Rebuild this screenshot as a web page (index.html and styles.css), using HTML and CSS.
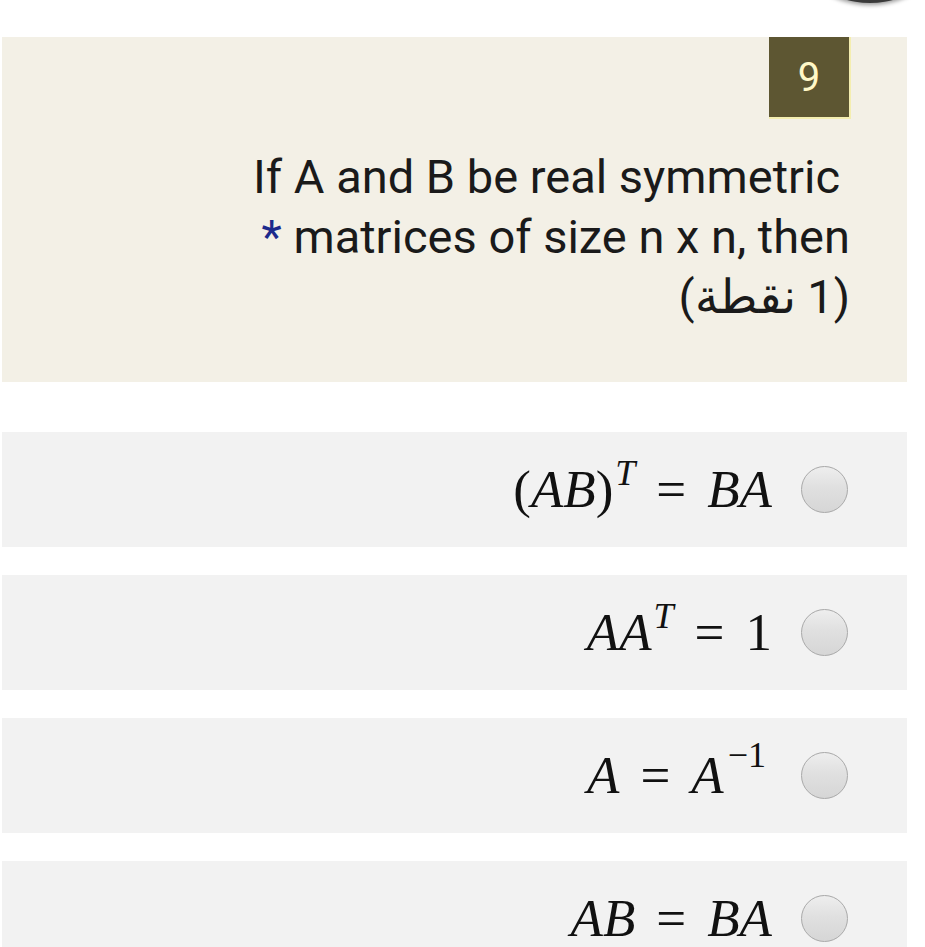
FILE: index.html
```html
<!DOCTYPE html>
<html lang="en">

<head>
    <meta charset="UTF-8">
    <meta name="viewport" content="width=device-width, initial-scale=1.0">
    <title>Question 9</title>
    <link rel="stylesheet" href="styles.css">
</head>

<body>
    <div class="fab-shadow"></div>

    <div class="page">
        <div class="question">
            <div class="badge">9</div>
            <div class="title">
                <p class="line line1">If A and B be real symmetric</p>
                <p class="line"><span class="req">*</span> matrices of size n x n, then</p>
                <p class="line" dir="rtl">(1 نقطة)</p>
            </div>
        </div>

        <div class="option">
            <span class="math">(<i>AB</i>)<sup><i>T</i></sup><span class="eq">=</span><i>BA</i></span>
            <span class="radio"></span>
        </div>
        <div class="option">
            <span class="math"><i>AA</i><sup><i>T</i></sup><span class="eq">=</span>1</span>
            <span class="radio"></span>
        </div>
        <div class="option">
            <span class="math"><i>A</i><span class="eq">=</span><i>A</i><sup class="neg">&minus;1</sup></span>
            <span class="radio"></span>
        </div>
        <div class="option">
            <span class="math"><i>AB</i><span class="eq">=</span><i>BA</i></span>
            <span class="radio"></span>
        </div>
    </div>
</body>

</html>
```

FILE: styles.css
```css
html {
    background: #ffffff;
    font-family: Roboto, 'Noto Sans', sans-serif;
}

body {
    margin: 0;
    overflow: hidden;
}

*,
*:before,
*:after {
    box-sizing: border-box;
}

/* bottom of a floating button peeking in at the top right */
.fab-shadow {
    position: absolute;
    top: -122px;
    right: -20px;
    width: 150px;
    height: 125px;
    border-radius: 50%;
    background: #3a3a3a;
    box-shadow: 0 2px 4px rgba(0, 0, 0, 0.4);
}

.page {
    width: 907px;
    padding: 37px 0 0 2px;
}

.question {
    background: #f3f0e6;
    height: 345px;
    display: flex;
    flex-direction: column;
}

.badge {
    align-self: flex-end;
    margin-right: 56px;
    width: 82px;
    height: 82px;
    background: #5d5632;
    border-right: 2px solid #f4eeb0;
    border-bottom: 2px solid #f4eeb0;
    color: #fff8c8;
    font-size: 40px;
    display: flex;
    justify-content: center;
    align-items: center;
}

.title {
    margin-top: 28px;
    padding-right: 57px;
    text-align: right;
    color: #1a1a1a;
}

.line {
    margin: 0;
    font-size: 47px;
    line-height: 60px;
}

.line1 {
    padding-right: 10px;
}

.req {
    color: #1c2a8c;
}

.option {
    background: #f2f2f2;
    height: 115px;
    margin-top: 28px;
    padding-right: 59px;
    display: flex;
    justify-content: flex-end;
    align-items: center;
}

.question + .option {
    margin-top: 50px;
}

.math {
    font-family: 'Liberation Serif', 'DejaVu Serif', serif;
    font-size: 53px;
    color: #111;
    margin-right: 29px;
    line-height: 1;
}

.math sup {
    font-size: 36px;
    vertical-align: 22px;
    line-height: 0;
    margin-left: 2px;
}

.math sup.neg {
    vertical-align: 26px;
    margin-left: 4px;
    margin-right: 6px;
}

.eq {
    margin: 0 21px;
}

.radio {
    width: 47px;
    height: 47px;
    border-radius: 50%;
    border: 1px solid #a9a9a9;
    background: linear-gradient(#eeeeee, #e0e0e0 45%, #d6d6d6);
    flex-shrink: 0;
}
```
